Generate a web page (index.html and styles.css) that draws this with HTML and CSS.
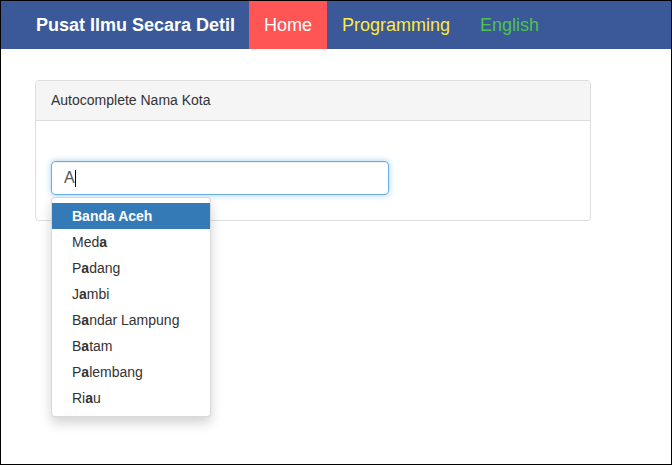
FILE: index.html
```html
<!DOCTYPE html>
<html lang="en">
<head>
    <meta charset="UTF-8">
    <meta name="viewport" content="width=device-width, initial-scale=1.0">
    <title>Autocomplete Nama Kota</title>
    <link rel="stylesheet" href="styles.css">
</head>
<body>
    <div class="window">
        <nav class="navbar">
            <a class="brand" href="#">Pusat Ilmu Secara Detil</a>
            <a class="nav-link home" href="#">Home</a>
            <a class="nav-link programming" href="#">Programming</a>
            <a class="nav-link english" href="#">English</a>
        </nav>

        <div class="panel">
            <div class="panel-heading">Autocomplete Nama Kota</div>
            <div class="panel-body">
                <div class="typeahead">
                    <div class="form-control"><span>A</span><span class="caret"></span></div>
                    <ul class="dropdown-menu">
                        <li class="active">Banda Aceh</li>
                        <li>Med<strong>a</strong></li>
                        <li>P<strong>a</strong>dang</li>
                        <li>J<strong>a</strong>mbi</li>
                        <li>B<strong>a</strong>ndar Lampung</li>
                        <li>B<strong>a</strong>tam</li>
                        <li>P<strong>a</strong>lembang</li>
                        <li>Ri<strong>a</strong>u</li>
                    </ul>
                </div>
            </div>
        </div>
    </div>
</body>
</html>
```

FILE: styles.css
```css
body {
    margin: 0;
    font-family: "Liberation Sans", Arial, sans-serif;
    font-size: 14px;
    color: #333;
}
.window {
    width: 672px;
    height: 465px;
    box-sizing: border-box;
    border: 1px solid #000;
    background: #fff;
    overflow: hidden;
}
.navbar {
    display: flex;
    height: 48px;
    background: #3b5998;
}
.navbar a {
    text-decoration: none;
    line-height: 48px;
    font-size: 18px;
}
.brand {
    color: #fff;
    font-weight: bold;
    padding-left: 35px;
    width: 213px;
}
.nav-link {
    padding: 0 15px;
}
.home {
    background: #ff5555;
    color: #fff;
}
.programming {
    color: #ffeb3b;
}
.english {
    color: #4cc44c;
}
.panel {
    margin: 31px 0 0 34px;
    width: 554px;
    border: 1px solid #ddd;
    border-radius: 4px;
}
.panel-heading {
    background: #f5f5f5;
    border-bottom: 1px solid #ddd;
    border-radius: 3px 3px 0 0;
    padding: 10px 15px;
    height: 19px;
    line-height: 19px;
}
.panel-body {
    padding: 40px 15px 25px;
}
.typeahead {
    position: relative;
}
.form-control {
    width: 338px;
    height: 34px;
    box-sizing: border-box;
    border: 1px solid #66afe9;
    border-radius: 4px;
    box-shadow: inset 0 1px 1px rgba(0,0,0,.075), 0 0 6px rgba(102,175,233,.6);
    padding: 6px 12px;
    font-size: 16px;
    line-height: 20px;
    color: #555;
    display: flex;
    align-items: center;
}
.caret {
    display: inline-block;
    width: 1px;
    height: 17px;
    background: #000;
}
.dropdown-menu {
    position: absolute;
    top: 36px;
    left: 0;
    width: 160px;
    box-sizing: border-box;
    margin: 0;
    padding: 5px 0;
    list-style: none;
    background: #fff;
    border: 1px solid rgba(0,0,0,.15);
    border-radius: 4px;
    box-shadow: 0 6px 12px rgba(0,0,0,.175);
}
.dropdown-menu li {
    padding: 3px 20px;
    line-height: 20px;
    color: #333;
    white-space: nowrap;
}
.dropdown-menu li.active {
    background: #337ab7;
    color: #fff;
    font-weight: bold;
}
```
